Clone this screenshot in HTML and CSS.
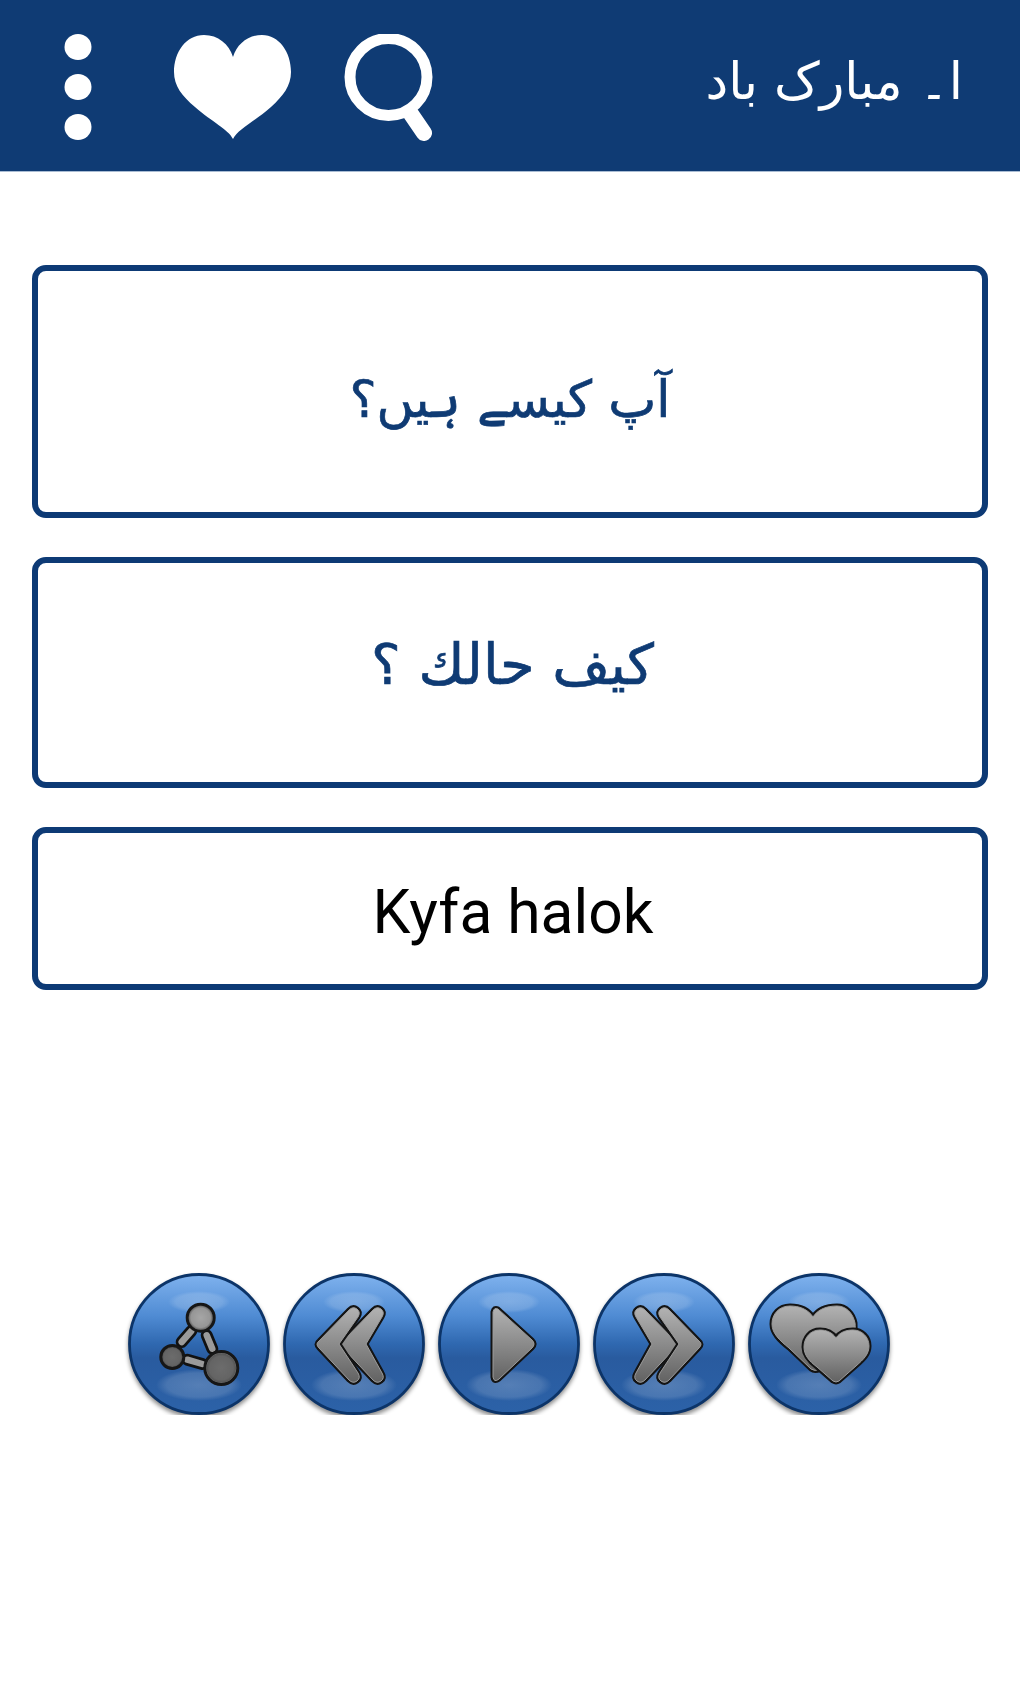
FILE: index.html
```html
<!DOCTYPE html>
<html lang="ur">
<head>
<meta charset="utf-8">
<title>مبارک باد</title>
<link rel="stylesheet" href="styles.css">
</head>
<body>
<svg class="defs" width="0" height="0" aria-hidden="true">
  <defs>
    <linearGradient id="ball" x1="0" y1="0" x2="0" y2="1">
      <stop offset="0" stop-color="#7fb2ee"/>
      <stop offset=".3" stop-color="#4f8bd3"/>
      <stop offset=".5" stop-color="#2f68b0"/>
      <stop offset=".6" stop-color="#295b9f"/>
      <stop offset="1" stop-color="#2c62a8"/>
    </linearGradient>
    <linearGradient id="metal" x1="0" y1="0" x2="0" y2="1">
      <stop offset="0" stop-color="#b2b2b2"/>
      <stop offset="1" stop-color="#626262"/>
    </linearGradient>
    <radialGradient id="node-light" cx=".5" cy=".5" r=".5">
      <stop offset="0" stop-color="#a6a6a6"/>
      <stop offset=".72" stop-color="#969696"/>
      <stop offset=".86" stop-color="#6e6e6e"/>
      <stop offset="1" stop-color="#d0d0d0"/>
    </radialGradient>
    <radialGradient id="node-dark" cx=".5" cy=".5" r=".5">
      <stop offset="0" stop-color="#6c6c6c"/>
      <stop offset=".72" stop-color="#646464"/>
      <stop offset=".86" stop-color="#565656"/>
      <stop offset="1" stop-color="#bcbcbc"/>
    </radialGradient>
    <radialGradient id="glow">
      <stop offset="0" stop-color="#fff" stop-opacity=".2"/>
      <stop offset=".75" stop-color="#fff" stop-opacity=".14"/>
      <stop offset="1" stop-color="#fff" stop-opacity="0"/>
    </radialGradient>
    <symbol id="base" viewBox="0 0 142 142">
      <circle cx="71" cy="71" r="69.5" fill="url(#ball)" stroke="#0c3468" stroke-width="2.8"/>
      <ellipse cx="71" cy="29" rx="31" ry="11" fill="url(#glow)"/>
      <ellipse cx="71" cy="112" rx="43" ry="16" fill="url(#glow)"/>
    </symbol>
    <path id="chev-back" d="M60 68L90 37Q94 33 98 36Q102 39 99 44L83 71L99 100Q102 105 98 108Q94 111 90 107L60 75Q57 71 60 68Z"/>
    <path id="chev-front" d="M36 68L66 37Q70 33 74 36Q78 39 75 44L56 71L75 100Q78 105 74 108Q70 111 66 107L36 75Q32 71 36 68Z"/>
    <path id="tri" d="M55 39Q56 34 60 36L94 67Q98 71 94 75L61 106Q56 110 55 104Z"/>
    <path id="heart-big" d="M65 44C60 36 51 33 42 33C31 33 24 41 24 51C24 60 31 67 41 75L63 96Q67 99 72 96L100 70C106 63 108 57 107 50C105 40 98 33 89 33C79 33 70 36 65 44Z"/>
    <path id="heart-small" d="M88 65C84 59 78 57 72 57C62 57 56 65 56 74C56 82 61 88 69 94L85 108Q88 110 91 108L108 93C116 86 121 81 121 73C121 64 114 57 105 57C98 57 92 59 88 65Z"/>
  </defs>
</svg>

<header class="topbar">
  <svg class="icon-dots" viewBox="0 0 28 107" aria-hidden="true">
    <ellipse cx="14" cy="13" rx="13.5" ry="13"/>
    <ellipse cx="14" cy="53" rx="13.5" ry="13"/>
    <ellipse cx="14" cy="93" rx="13.5" ry="13"/>
  </svg>
  <svg class="icon-heart" viewBox="0 0 117 106" aria-hidden="true">
    <path d="M59 23C55 10 44 1 30 1C12 1 0 18 0 38C0 52 8 62 21 73C38 88 54 95 59 105C64 95 80 88 97 73C109 62 117 52 117 38C117 18 105 1 88 1C74 1 63 10 59 23Z"/>
  </svg>
  <svg class="icon-search" viewBox="0 0 91 107" aria-hidden="true">
    <circle cx="44.5" cy="43" r="38.5"/>
    <path d="M67 80L80 99"/>
  </svg>
  <h1 class="title" dir="rtl">ا۔ مبارک باد</h1>
</header>

<main class="content">
  <section class="card card-question">
    <p class="arabic arabic-large" dir="rtl">آپ کیسے ہیں؟</p>
  </section>
  <section class="card card-translation">
    <p class="arabic arabic-medium" dir="rtl">كيف حالك ؟</p>
  </section>
  <section class="card card-latin">
    <p class="latin">Kyfa halok</p>
  </section>

  <nav class="controls">
    <svg class="ball" viewBox="0 0 142 142" aria-label="share">
      <use href="#base"/>
      <path d="M53.7 69L63.3 58M78.7 62.3L84.3 75.7M59.3 86.7L74.3 91" stroke="#111" stroke-width="12" stroke-linecap="round" fill="none"/>
      <path d="M53.7 69L63.3 58M78.7 62.3L84.3 75.7M59.3 86.7L74.3 91" stroke="#9a9a9a" stroke-width="6.5" stroke-linecap="round" fill="none"/>
      <circle cx="72.7" cy="44.7" r="13.5" fill="url(#node-light)" stroke="#161616" stroke-width="3"/>
      <circle cx="44.3" cy="84" r="11.5" fill="url(#node-dark)" stroke="#161616" stroke-width="3"/>
      <circle cx="93.3" cy="95" r="16.5" fill="url(#node-dark)" stroke="#161616" stroke-width="3"/>
    </svg>
    <svg class="ball" viewBox="0 0 142 142" aria-label="previous">
      <use href="#base"/>
      <use class="outline" href="#chev-back"/><use class="face" href="#chev-back"/>
      <use class="outline" href="#chev-front"/><use class="face" href="#chev-front"/>
    </svg>
    <svg class="ball" viewBox="0 0 142 142" aria-label="play">
      <use href="#base"/>
      <use class="outline" href="#tri"/><use class="face" href="#tri"/>
    </svg>
    <svg class="ball" viewBox="0 0 142 142" aria-label="next">
      <use href="#base"/>
      <g class="flip">
        <use class="outline" href="#chev-back"/><use class="face" href="#chev-back"/>
        <use class="outline" href="#chev-front"/><use class="face" href="#chev-front"/>
      </g>
    </svg>
    <svg class="ball" viewBox="0 0 142 142" aria-label="favourites">
      <use href="#base"/>
      <use class="outline" href="#heart-big"/><use class="face" href="#heart-big"/>
      <use class="outline" href="#heart-small"/><use class="face" href="#heart-small"/>
    </svg>
  </nav>
</main>
</body>
</html>
```

FILE: styles.css
```css
html, body {
  margin: 0;
  padding: 0;
  background: #fff;
}

.defs {
  position: absolute;
}

.topbar {
  display: flex;
  align-items: flex-start;
  height: 137px;
  padding: 34px 57px 0 64px;
  background: #0f3b74;
  border-bottom: 1px solid #a9bcd3;
}

.icon-dots {
  width: 28px;
  height: 107px;
  margin-right: 82px;
  fill: #fff;
}

.icon-heart {
  width: 117px;
  height: 106px;
  margin-right: 53px;
  fill: #fff;
}

.icon-search {
  width: 91px;
  height: 107px;
  fill: none;
  stroke: #fff;
}

.icon-search circle {
  stroke-width: 11;
}

.icon-search path {
  stroke-width: 16;
  stroke-linecap: round;
}

.title {
  margin: 0 0 0 auto;
  font-family: "DejaVu Sans", sans-serif;
  font-size: 51px;
  font-weight: normal;
  line-height: 96px;
  color: #fff;
}

.content {
  padding: 93px 32px 0;
}

.card {
  display: flex;
  align-items: center;
  justify-content: center;
  box-sizing: border-box;
  margin-bottom: 39px;
  border: 6px solid #0d3a75;
  border-radius: 14px;
  background: #fff;
}

.card-question {
  height: 253px;
}

.card-translation {
  height: 231px;
}

.card-latin {
  height: 163px;
  margin-bottom: 0;
}

.card p {
  margin: 0;
}

.arabic {
  font-family: "DejaVu Sans", sans-serif;
  color: #0f3b74;
  -webkit-text-stroke: .7px #0f3b74;
}

.arabic-large {
  font-size: 51px;
  padding-top: 16px;
}

.arabic-medium {
  font-size: 56px;
  padding: 0 0 16px 5px;
}

.latin {
  font-family: Roboto, sans-serif;
  font-size: 60.5px;
  padding: 8px 0 0 6px;
  color: #000;
}

.controls {
  display: flex;
  justify-content: center;
  gap: 13px;
  margin-top: 283px;
  padding-right: 2px;
}

.ball {
  width: 142px;
  height: 142px;
  overflow: visible;
  filter: drop-shadow(0 3px 2px rgba(0, 0, 0, .45)) blur(.4px);
}

.outline {
  fill: #141414;
  stroke: #141414;
  stroke-width: 5;
  stroke-linejoin: round;
}

.face {
  fill: url(#metal);
  stroke: #9c9c9c;
  stroke-width: 1;
  stroke-linejoin: round;
}

.flip {
  transform: translateX(142px) scaleX(-1);
}
```
